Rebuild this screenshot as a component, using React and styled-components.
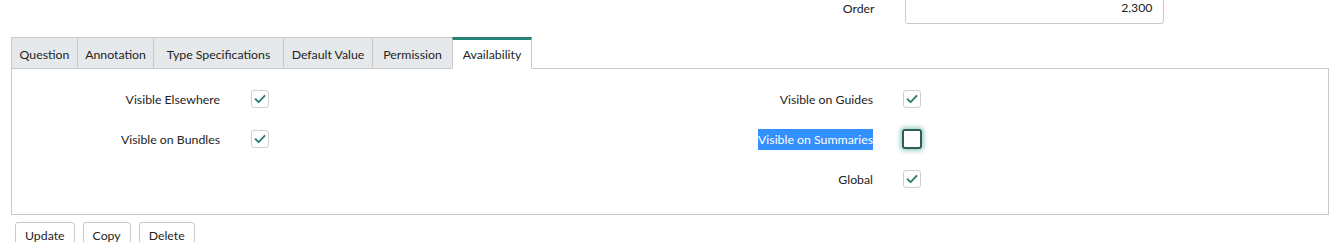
import React from "react";
import styled, { createGlobalStyle } from "styled-components";

const Global = createGlobalStyle`
  html, body { margin: 0; padding: 0; background: #fff; }
  body { font-family: "Source Sans Pro", Lato, "Noto Sans", sans-serif; font-size: 12.3px; color: #232323; overflow: hidden; }
`;

const Page = styled.div`
  padding: 0 11px;
  margin-top: -8px;
`;

const TopRow = styled.div`
  display: flex;
`;

const Half = styled.div`
  flex: 1;
  display: flex;
  align-items: center;
  padding-left: ${(p) => p.$pad || 0}px;
`;

const FieldLabel = styled.label`
  width: ${(p) => p.$w}px;
  flex: none;
  text-align: right;
  padding-right: ${(p) => p.$gap}px;
  box-sizing: content-box;
`;

const NumberInput = styled.div`
  width: 259px;
  height: 32px;
  box-sizing: border-box;
  border: 1px solid #c9c9c9;
  border-radius: 3px;
  display: flex;
  align-items: center;
  justify-content: flex-end;
  padding-right: 10px;
  padding-bottom: 1px;
`;

const Tabs = styled.div`
  display: flex;
  margin-top: 13px;
  height: 32px;
`;

const Tab = styled.div`
  display: flex;
  align-items: center;
  justify-content: center;
  width: ${(p) => p.$w}px;
  box-sizing: border-box;
  background: ${(p) => (p.$active ? "#fff" : "#e6e9eb")};
  border-top: ${(p) => (p.$active ? "3px solid #278276" : "1px solid #c9c9c9")};
  border-left: 1px solid #c9c9c9;
  border-right: ${(p) => (p.$last ? "1px solid #c9c9c9" : "none")};
  border-bottom: ${(p) => (p.$active ? "1px solid #fff" : "1px solid #c9c9c9")};
  padding-top: ${(p) => (p.$active ? 0 : 2)}px;
  position: relative;
  z-index: 1;
`;

const Panel = styled.div`
  border: 1px solid #c9c9c9;
  margin-top: -1px;
  display: flex;
  padding: 10px 0 15px;
`;

const Column = styled.div`
  flex: 1;
  display: flex;
  flex-direction: column;
`;

const Row = styled.div`
  display: flex;
  align-items: center;
  height: 40px;
`;

const Selected = styled.span`
  background: #3390ff;
  color: #fff;
  padding: 3px 0 3px;
`;

const Box = styled.div`
  width: 18px;
  height: 18px;
  box-sizing: border-box;
  border: 1px solid ${(p) => (p.$focus ? "#2c5c55" : "#cfcfcf")};
  border-radius: 3px;
  display: flex;
  align-items: center;
  justify-content: center;
  box-shadow: ${(p) => (p.$focus ? "0 0 4px 2px rgba(39,150,130,0.45)" : "none")};
  ${(p) => p.$focus && "width: 20px; height: 20px; border-width: 2px; margin-left: -1px;"}
`;

const Buttons = styled.div`
  display: flex;
  gap: 8px;
  margin: 7px 0 0 4px;
`;

const Button = styled.button`
  font: inherit;
  color: #232323;
  background: #fff;
  border: 1px solid #c9c9c9;
  border-radius: 3px;
  height: 30px;
  padding: 5px 9px 0;
  display: flex;
  align-items: flex-start;
`;

const Check = () => (
  <svg width="12" height="10" viewBox="0 0 12 10">
    <path d="M1.5 5.2 L4.6 8.2 L10.6 1.8" fill="none" stroke="#2a7b70" strokeWidth="1.8" strokeLinecap="round" strokeLinejoin="round" />
  </svg>
);

const CheckBox = ({ checked, focus }) => <Box $focus={focus}>{checked && <Check />}</Box>;

const tabs = [
  ["Question", 66],
  ["Annotation", 76],
  ["Type Specifications", 130],
  ["Default Value", 89],
  ["Permission", 80],
  ["Availability", 80],
];

export default function App() {
  return (
    <>
      <Global />
      <Page>
        <TopRow>
          <Half />
          <Half $pad={1}>
            <FieldLabel $w={204} $gap={30}>Order</FieldLabel>
            <NumberInput>2,300</NumberInput>
          </Half>
        </TopRow>
        <Tabs>
          {tabs.map(([t, w], i) => (
            <Tab key={t} $w={w} $active={t === "Availability"} $last={i === tabs.length - 1}>
              {t}
            </Tab>
          ))}
        </Tabs>
        <Panel>
          <Column>
            <Row>
              <FieldLabel $w={208} $gap={31}>Visible Elsewhere</FieldLabel>
              <CheckBox checked />
            </Row>
            <Row>
              <FieldLabel $w={208} $gap={31}>Visible on Bundles</FieldLabel>
              <CheckBox checked />
            </Row>
          </Column>
          <Column>
            <Row>
              <FieldLabel $w={203} $gap={30}>Visible on Guides</FieldLabel>
              <CheckBox checked />
            </Row>
            <Row>
              <FieldLabel $w={203} $gap={30}><Selected>Visible on Summaries</Selected></FieldLabel>
              <CheckBox focus />
            </Row>
            <Row>
              <FieldLabel $w={203} $gap={30}>Global</FieldLabel>
              <CheckBox checked />
            </Row>
          </Column>
        </Panel>
        <Buttons>
          <Button>Update</Button>
          <Button>Copy</Button>
          <Button>Delete</Button>
        </Buttons>
      </Page>
    </>
  );
}
